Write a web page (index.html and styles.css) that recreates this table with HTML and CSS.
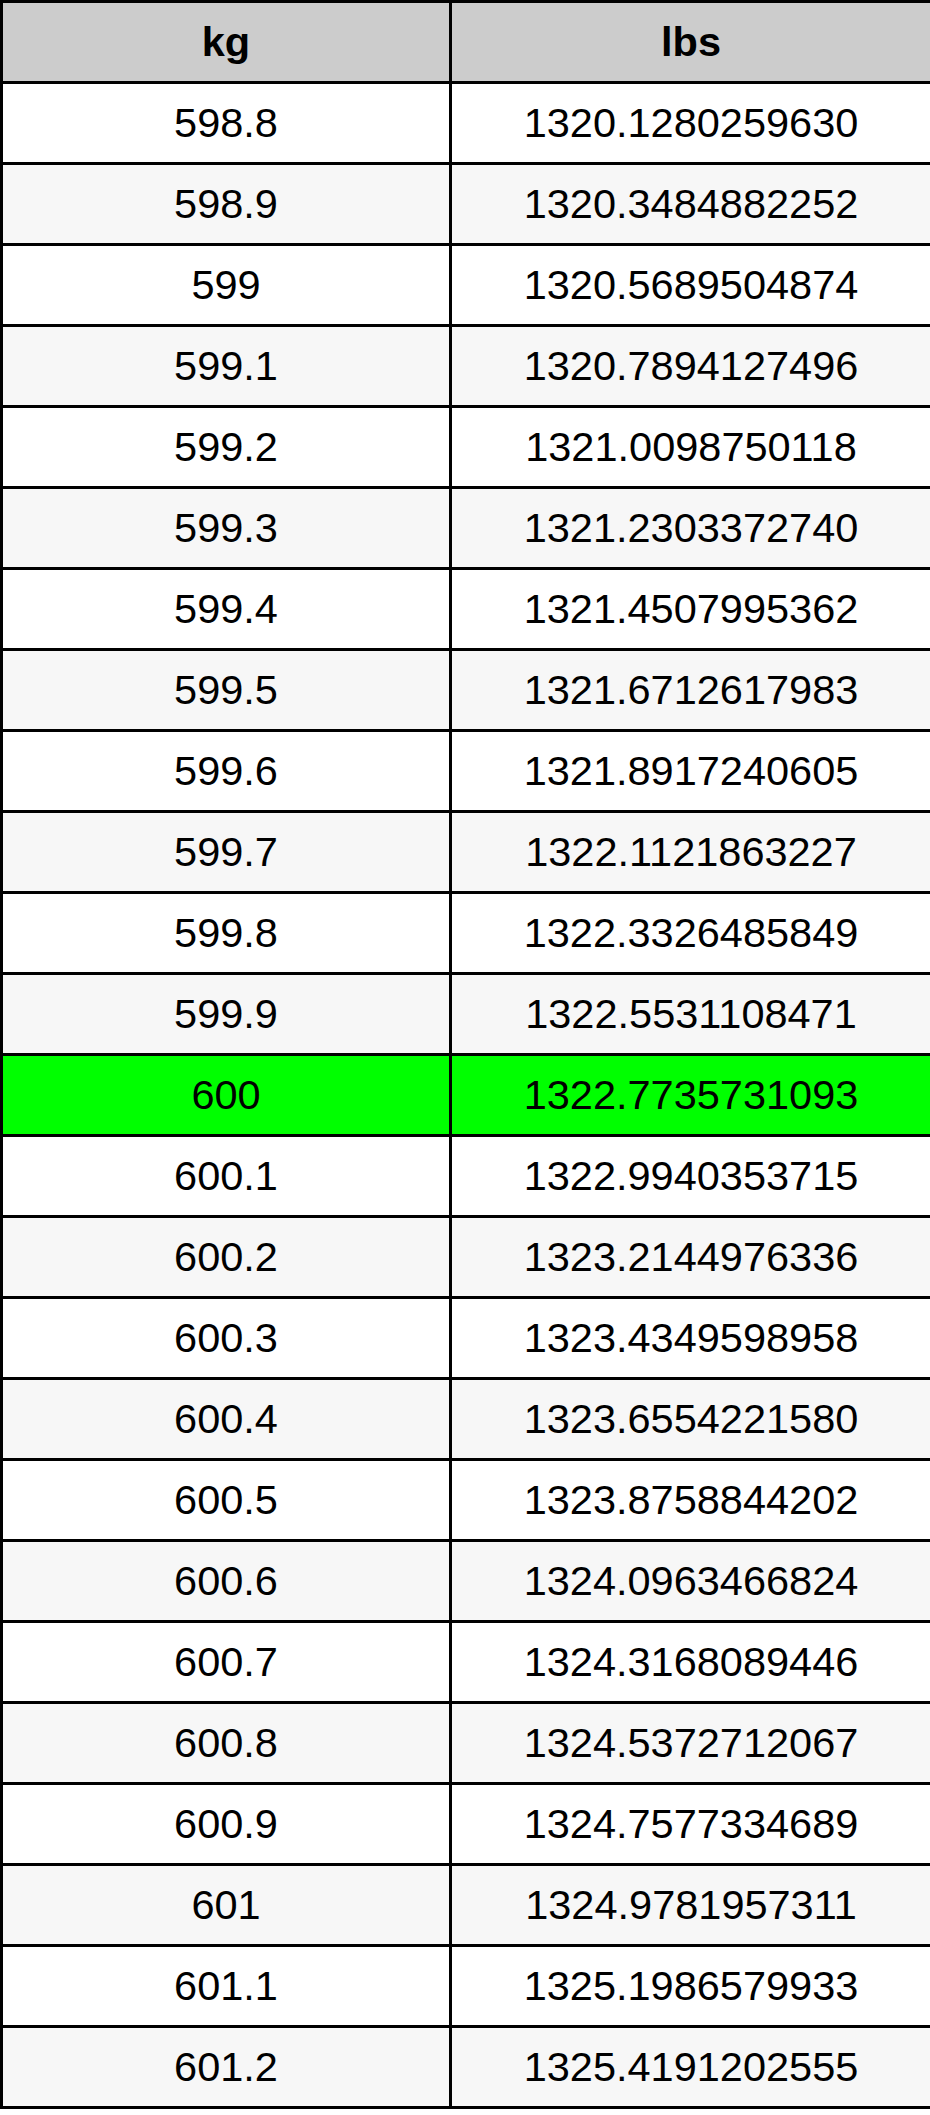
FILE: index.html
```html
<!DOCTYPE html>
<html>
<head>
<meta charset="utf-8">
<link rel="stylesheet" href="styles.css">
</head>
<body>
<table class="conv">
  <colgroup><col class="c1"><col class="c2"></colgroup>
  <thead>
    <tr><th>kg</th><th>lbs</th></tr>
  </thead>
  <tbody>
    <tr><td>598.8</td><td>1320.1280259630</td></tr>
    <tr class="alt"><td>598.9</td><td>1320.3484882252</td></tr>
    <tr><td>599</td><td>1320.5689504874</td></tr>
    <tr class="alt"><td>599.1</td><td>1320.7894127496</td></tr>
    <tr><td>599.2</td><td>1321.0098750118</td></tr>
    <tr class="alt"><td>599.3</td><td>1321.2303372740</td></tr>
    <tr><td>599.4</td><td>1321.4507995362</td></tr>
    <tr class="alt"><td>599.5</td><td>1321.6712617983</td></tr>
    <tr><td>599.6</td><td>1321.8917240605</td></tr>
    <tr class="alt"><td>599.7</td><td>1322.1121863227</td></tr>
    <tr><td>599.8</td><td>1322.3326485849</td></tr>
    <tr class="alt"><td>599.9</td><td>1322.5531108471</td></tr>
    <tr class="hl"><td>600</td><td>1322.7735731093</td></tr>
    <tr><td>600.1</td><td>1322.9940353715</td></tr>
    <tr class="alt"><td>600.2</td><td>1323.2144976336</td></tr>
    <tr><td>600.3</td><td>1323.4349598958</td></tr>
    <tr class="alt"><td>600.4</td><td>1323.6554221580</td></tr>
    <tr><td>600.5</td><td>1323.8758844202</td></tr>
    <tr class="alt"><td>600.6</td><td>1324.0963466824</td></tr>
    <tr><td>600.7</td><td>1324.3168089446</td></tr>
    <tr class="alt"><td>600.8</td><td>1324.5372712067</td></tr>
    <tr><td>600.9</td><td>1324.7577334689</td></tr>
    <tr class="alt"><td>601</td><td>1324.9781957311</td></tr>
    <tr><td>601.1</td><td>1325.1986579933</td></tr>
    <tr class="alt"><td>601.2</td><td>1325.4191202555</td></tr>
  </tbody>
</table>
</body>
</html>
```

FILE: styles.css
```css
html, body {
  margin: 0;
  padding: 0;
  background: #ffffff;
}

.conv {
  width: 930px;
  border-collapse: collapse;
  table-layout: fixed;
  font-family: "Liberation Sans", Arial, sans-serif;
  font-size: 41.5px;
  color: #000000;
}

.c1 { width: 449px; }
.c2 { width: 481px; }

.conv th,
.conv td {
  border: 3px solid #000000;
  height: 78px;
  padding: 0;
  text-align: center;
  vertical-align: middle;
  line-height: 1;
}

.conv th {
  background: #cccccc;
  font-weight: bold;
}

.conv tr.alt td {
  background: #f7f7f7;
}

.conv tr.hl td {
  background: #00ff00;
}
```
